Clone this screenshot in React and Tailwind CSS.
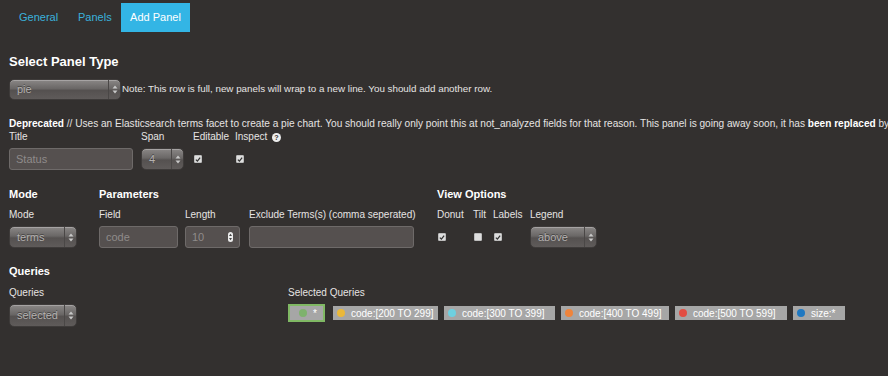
import React from "react";

const selectBg =
  "bg-[linear-gradient(to_bottom,#8a8786_0%,#6a6766_45%,#555150_55%,#5f5b5a_100%)]";

function Arrows() {
  return (
    <svg width="6" height="9" viewBox="0 0 6 9" className="text-[#c8c8c8]">
      <path d="M3 0.5 L5.5 3.5 H0.5 Z" fill="currentColor" />
      <path d="M3 8.5 L5.5 5.5 H0.5 Z" fill="currentColor" />
    </svg>
  );
}

function Select({ value, width, height = "h-[22px]" }) {
  return (
    <div
      className={`${width} ${height} ${selectBg} flex items-stretch rounded-[5px] border border-[#3e3b3a] shadow-[inset_0_1px_0_rgba(255,255,255,0.25)]`}
    >
      <span className="flex-1 flex items-center pl-[7px] text-[11px] text-[#b4b1b0] [text-shadow:0_-1px_0_rgba(0,0,0,0.4)]">
        {value}
      </span>
      <span className="w-[12px] flex items-center justify-center border-l border-[#4a4746]">
        <Arrows />
      </span>
    </div>
  );
}

function Input({ value, width, spinner }) {
  return (
    <div
      className={`${width} h-[22px] flex items-center justify-between rounded-[3px] border border-[#6e6a69] bg-[#55504f] pl-[6px] pr-[6px] text-[11px] text-[#8f8b8a]`}
    >
      <span>{value}</span>
      {spinner && (
        <svg width="5" height="10" viewBox="0 0 5 10">
          <rect x="0" y="0" width="5" height="10" rx="2.5" fill="#ececec" />
          <path d="M2.5 1.8 L4 4 H1 Z" fill="#444" />
          <path d="M2.5 8.2 L4 6 H1 Z" fill="#444" />
        </svg>
      )}
    </div>
  );
}

function Check({ checked = true }) {
  return (
    <span className="w-[8px] h-[8px] rounded-[1px] bg-[#dedede] border border-[#bdbdbd] flex items-center justify-center">
      {checked && (
        <svg width="7" height="7" viewBox="0 0 7 7">
          <path d="M1 3.6 L2.8 5.4 L6 1.2" stroke="#333" strokeWidth="1.5" fill="none" />
        </svg>
      )}
    </span>
  );
}

function Label({ children }) {
  return <div className="h-[12px] leading-[12px] text-[10px] text-[#e6e4e3] whitespace-nowrap">{children}</div>;
}

function Heading({ children }) {
  return <div className="h-[16px] leading-[16px] text-[11px] font-bold text-white whitespace-nowrap">{children}</div>;
}

const chips = [
  { label: "code:[200 TO 299]", color: "bg-[#eab839]", w: "w-[105px]" },
  { label: "code:[300 TO 399]", color: "bg-[#6ed0e0]", w: "w-[111px]" },
  { label: "code:[400 TO 499]", color: "bg-[#ef843c]", w: "w-[108px]" },
  { label: "code:[500 TO 599]", color: "bg-[#e24d42]", w: "w-[112px]" },
  { label: "size:*", color: "bg-[#1f78c1]", w: "w-[52px]" },
];

export default function App() {
  return (
    <div className="w-[888px] h-[376px] overflow-hidden bg-[#33302f] text-[#e6e4e3] font-['Liberation_Sans',Arial,sans-serif]">
      {/* tabs */}
      <div className="flex gap-px pl-[9px] pt-[3px] h-[32px] text-[11px]">
        <div className="w-[58px] h-[29px] pl-[10px] flex items-center text-[#3ab0dc]">General</div>
        <div className="w-[52px] h-[29px] pl-[10px] flex items-center text-[#3ab0dc]">Panels</div>
        <div className="w-[69px] h-[29px] flex items-center justify-center bg-[#33b5e5] text-white">Add Panel</div>
      </div>

      <div className="pl-[9px]">
        <div className="mt-[22px] h-[16px] leading-[16px] text-[13px] font-bold text-white">Select Panel Type</div>

        <div className="mt-[9px] flex items-center">
          <Select value="pie" width="w-[112px]" height="h-[21px]" />
          <span className="ml-[1px] text-[9.8px] text-[#e6e4e3] whitespace-nowrap">
            Note: This row is full, new panels will wrap to a new line. You should add another row.
          </span>
        </div>

        <div className="mt-[18px] h-[12px] leading-[12px] text-[10.1px] whitespace-nowrap">
          <b className="text-white">Deprecated</b> // Uses an Elasticsearch terms facet to create a pie chart. You should really only point this at not_analyzed fields for that reason. This panel is going away soon, it has <b className="text-white">been replaced</b> by the terms panel.
        </div>

        <div className="mt-[1px] flex">
          <div className="w-[132px]">
            <Label>Title</Label>
            <div className="mt-[5px]"><Input value="Status" width="w-[124px]" /></div>
          </div>
          <div className="w-[52px]">
            <Label>Span</Label>
            <div className="mt-[5px]"><Select value="4" width="w-[43px]" /></div>
          </div>
          <div className="w-[42px]">
            <Label>Editable</Label>
            <div className="mt-[12px] pl-[1px]"><Check /></div>
          </div>
          <div>
            <Label>
              <span className="flex items-center gap-[5px]">
                Inspect
                <svg width="9" height="9" viewBox="0 0 10 10">
                  <circle cx="5" cy="5" r="5" fill="#eeeeee" />
                  <text x="5" y="8.2" textAnchor="middle" fontSize="8" fontWeight="bold" fill="#33302f" fontFamily="Liberation Sans, Arial, sans-serif">?</text>
                </svg>
              </span>
            </Label>
            <div className="mt-[12px] pl-[1px]"><Check /></div>
          </div>
        </div>

        {/* mode / parameters / view options */}
        <div className="mt-[16px] flex">
          <div className="w-[90px]">
            <Heading>Mode</Heading>
            <div className="mt-[7px]"><Label>Mode</Label></div>
            <div className="mt-[5px]"><Select value="terms" width="w-[68px]" /></div>
          </div>
          <div className="w-[338px]">
            <Heading>Parameters</Heading>
            <div className="mt-[7px] flex">
              <div className="w-[86px]">
                <Label>Field</Label>
                <div className="mt-[5px]"><Input value="code" width="w-[79px]" /></div>
              </div>
              <div className="w-[64px]">
                <Label>Length</Label>
                <div className="mt-[5px]"><Input value="10" width="w-[55px]" spinner /></div>
              </div>
              <div>
                <Label>Exclude Terms(s) (comma seperated)</Label>
                <div className="mt-[5px]"><Input value="" width="w-[165px]" /></div>
              </div>
            </div>
          </div>
          <div>
            <Heading>View Options</Heading>
            <div className="mt-[7px] flex">
              <div className="w-[36px]">
                <Label>Donut</Label>
                <div className="mt-[12px] pl-[1px]"><Check /></div>
              </div>
              <div className="w-[20px]">
                <Label>Tilt</Label>
                <div className="mt-[12px] pl-[1px]"><Check checked={false} /></div>
              </div>
              <div className="w-[37px]">
                <Label>Labels</Label>
                <div className="mt-[12px] pl-[1px]"><Check /></div>
              </div>
              <div>
                <Label>Legend</Label>
                <div className="mt-[5px]"><Select value="above" width="w-[67px]" /></div>
              </div>
            </div>
          </div>
        </div>

        {/* queries */}
        <div className="mt-[15px] flex">
          <div className="w-[279px]">
            <Heading>Queries</Heading>
            <div className="mt-[8px]"><Label>Queries</Label></div>
            <div className="mt-[5px]"><Select value="selected" width="w-[68px]" height="h-[23px]" /></div>
          </div>
          <div className="pt-[24px]">
            <Label>Selected Queries</Label>
            <div className="mt-[5px] flex items-center">
              <div className="w-[37px] h-[18px] border-2 border-[#80b864] bg-[#a6a6a6] flex items-center pl-[9px] gap-[6px] text-[10px] text-white">
                <span className="w-[8px] h-[8px] rounded-full bg-[#7eb26d]" />
                <span>*</span>
              </div>
              {chips.map((c, i) => (
                <div
                  key={i}
                  className={`${c.w} ${i === 0 ? "ml-[8px]" : "ml-[6px]"} h-[14px] bg-[#a6a6a6] flex items-center pl-[4px] gap-[6px] text-[10px] text-white whitespace-nowrap`}
                >
                  <span className={`w-[8px] h-[8px] rounded-full shrink-0 ${c.color}`} />
                  <span>{c.label}</span>
                </div>
              ))}
            </div>
          </div>
        </div>
      </div>
    </div>
  );
}
